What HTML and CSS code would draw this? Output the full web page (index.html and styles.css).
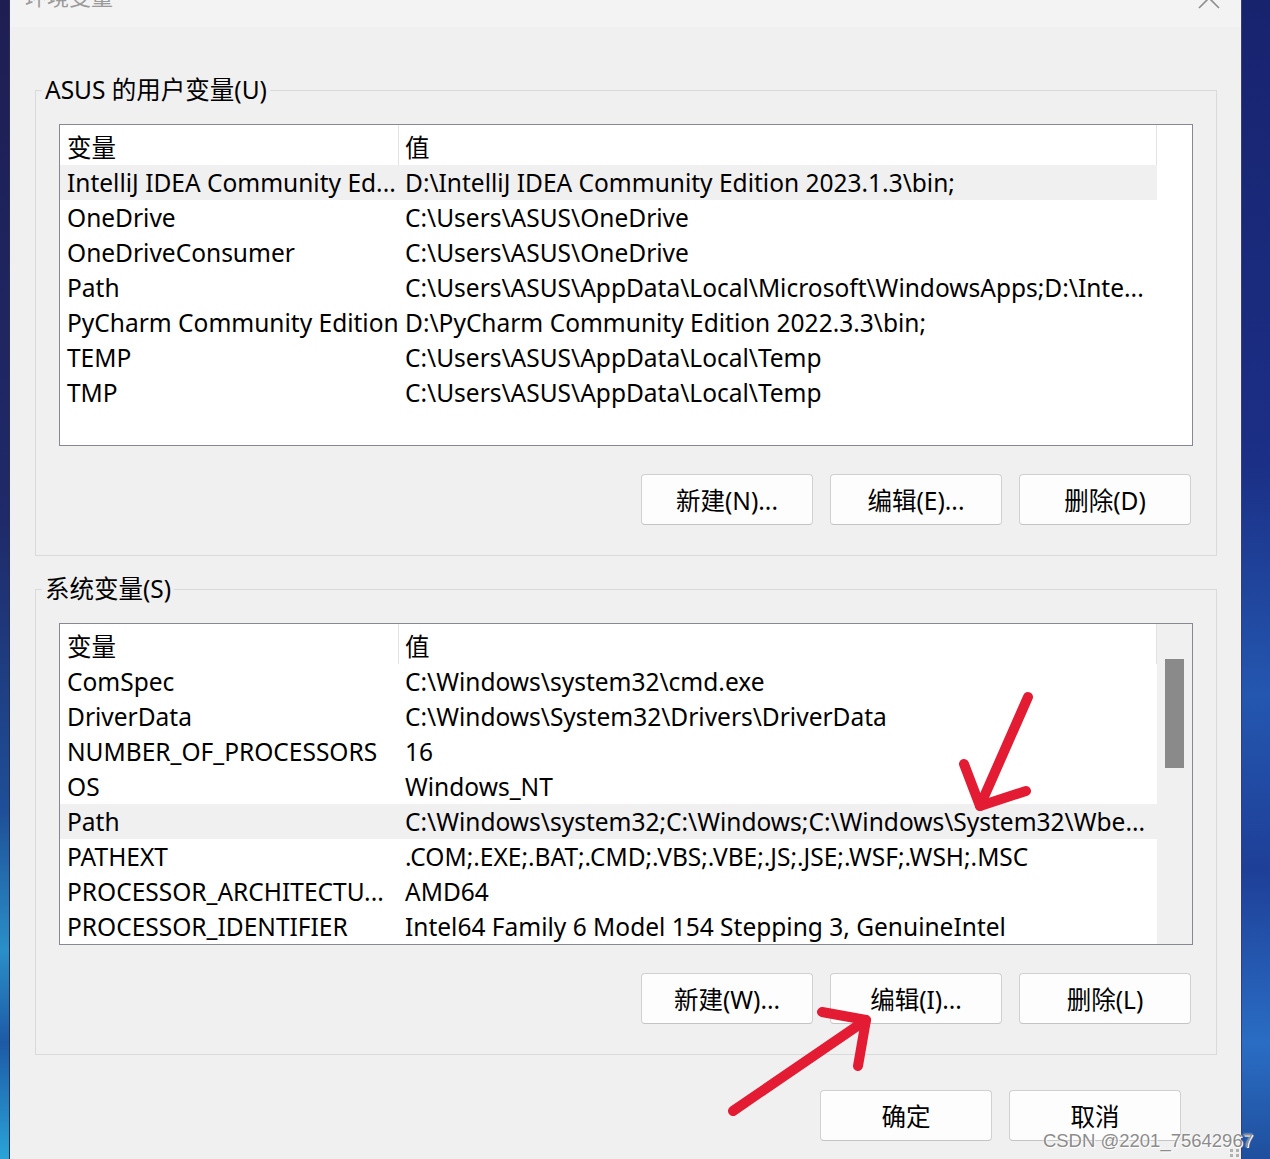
FILE: index.html
```html
<!DOCTYPE html>
<html lang="zh-CN">
<head>
<meta charset="utf-8">
<title>环境变量</title>
<link rel="stylesheet" href="styles.css">
</head>
<body>
<div class="screen">
  <div class="wall wall-left"></div>
  <div class="dialog">
    <div class="titlebar">
      <span class="title">环境变量</span>
      <svg class="close" width="24" height="24" viewBox="0 0 24 24"><path d="M2 2 L22 22 M22 2 L2 22" stroke="#8c8c8c" stroke-width="1.6" fill="none"/></svg>
    </div>
    <div class="content">
      <fieldset class="group">
        <legend>ASUS 的用户变量(U)</legend>
        <div class="group-inner">
          <div class="list">
            <div class="table">
              <div class="row head"><div class="cell name">变量</div><div class="cell value">值</div></div>
              <div class="row selected"><div class="cell name">IntelliJ IDEA Community Ed...</div><div class="cell value">D:\IntelliJ IDEA Community Edition 2023.1.3\bin;</div></div>
              <div class="row"><div class="cell name">OneDrive</div><div class="cell value">C:\Users\ASUS\OneDrive</div></div>
              <div class="row"><div class="cell name">OneDriveConsumer</div><div class="cell value">C:\Users\ASUS\OneDrive</div></div>
              <div class="row"><div class="cell name">Path</div><div class="cell value">C:\Users\ASUS\AppData\Local\Microsoft\WindowsApps;D:\Inte...</div></div>
              <div class="row"><div class="cell name">PyCharm Community Edition</div><div class="cell value">D:\PyCharm Community Edition 2022.3.3\bin;</div></div>
              <div class="row"><div class="cell name">TEMP</div><div class="cell value">C:\Users\ASUS\AppData\Local\Temp</div></div>
              <div class="row"><div class="cell name">TMP</div><div class="cell value">C:\Users\ASUS\AppData\Local\Temp</div></div>
            </div>
            <div class="gutter"></div>
          </div>
          <div class="buttons">
            <button class="btn">新建(N)...</button>
            <button class="btn">编辑(E)...</button>
            <button class="btn">删除(D)</button>
          </div>
        </div>
      </fieldset>

      <fieldset class="group group-sys">
        <legend>系统变量(S)</legend>
        <div class="group-inner">
          <div class="list">
            <div class="table">
              <div class="row head"><div class="cell name">变量</div><div class="cell value">值</div></div>
              <div class="row"><div class="cell name">ComSpec</div><div class="cell value">C:\Windows\system32\cmd.exe</div></div>
              <div class="row"><div class="cell name">DriverData</div><div class="cell value">C:\Windows\System32\Drivers\DriverData</div></div>
              <div class="row"><div class="cell name">NUMBER_OF_PROCESSORS</div><div class="cell value">16</div></div>
              <div class="row"><div class="cell name">OS</div><div class="cell value">Windows_NT</div></div>
              <div class="row selected"><div class="cell name">Path</div><div class="cell value">C:\Windows\system32;C:\Windows;C:\Windows\System32\Wbe...</div></div>
              <div class="row"><div class="cell name">PATHEXT</div><div class="cell value">.COM;.EXE;.BAT;.CMD;.VBS;.VBE;.JS;.JSE;.WSF;.WSH;.MSC</div></div>
              <div class="row"><div class="cell name">PROCESSOR_ARCHITECTU...</div><div class="cell value">AMD64</div></div>
              <div class="row"><div class="cell name">PROCESSOR_IDENTIFIER</div><div class="cell value">Intel64 Family 6 Model 154 Stepping 3, GenuineIntel</div></div>
            </div>
            <div class="gutter scrollbar"><div class="thumb"></div></div>
          </div>
          <div class="buttons">
            <button class="btn">新建(W)...</button>
            <button class="btn">编辑(I)...</button>
            <button class="btn">删除(L)</button>
          </div>
        </div>
      </fieldset>

      <div class="footer">
        <button class="btn">确定</button>
        <button class="btn">取消</button>
      </div>
    </div>
  </div>
  <div class="wall wall-right"></div>

  <svg class="arrows" width="1270" height="1159" viewBox="0 0 1270 1159">
    <g stroke="#e31b33" stroke-width="10" stroke-linecap="round" stroke-linejoin="round" fill="none">
      <path d="M1028 697 L980 806"/>
      <path d="M964 764 L980 806 L1026 791"/>
      <path d="M733 1111 L866 1020"/>
      <path d="M822 1012 L866 1020 L858 1066"/>
    </g>
  </svg>
  <div class="watermark">CSDN @2201_75642967</div>
  <div class="grip"><i></i><i></i><i></i><i></i></div>
</div>
</body>
</html>
```
FILE: styles.css
```css
html, body {
  margin: 0;
  padding: 0;
}
body {
  width: 1270px;
  height: 1159px;
  overflow: hidden;
  font-family: "Noto Sans", "Noto Sans CJK SC", sans-serif;
  color: #000;
}
.screen {
  position: relative;
  display: flex;
  width: 1270px;
  height: 1159px;
  overflow: hidden;
}
.wall-left {
  width: 10px;
  flex: none;
  background: linear-gradient(180deg, #1e1e52 0%, #1f2a6a 45%, #1e4f97 70%, #2a8fc8 82%, #1d5aa6 90%, #2aa4d8 100%);
  border-right: 1px solid #2b2e4a;
  box-sizing: border-box;
}
.wall-right {
  flex: 1;
  background: linear-gradient(180deg, #18236e 0%, #1b2f86 40%, #2457b0 60%, #1e3f98 75%, #2a6dc4 90%, #1f4f9e 100%);
  border-left: 1px solid #3b3f66;
}
.dialog {
  width: 1231px;
  flex: none;
  background: #f0f0f0;
  position: relative;
}
.titlebar {
  height: 27px;
  background: #f3f3f3;
  position: relative;
  overflow: hidden;
}
.title {
  display: block;
  margin: -16px 0 0 15px;
  font-size: 22px;
  line-height: 24px;
  color: #9a9a9a;
}
.close {
  position: absolute;
  left: 1187px;
  top: -14px;
}
.content {
  padding: 48px 24px 0 25px;
}
.group {
  margin: 0;
  padding: 0;
  border: 1px solid #dadada;
  min-width: 0;
}
.group-sys {
  margin-top: 18px;
}
.group legend {
  margin-left: 6px;
  padding: 0 3px;
  font-size: 24.5px;
  line-height: 30px;
}
.group-inner {
  padding: 19px 23px 30px 23px;
}
.list {
  height: 322px;
  box-sizing: border-box;
  border: 1px solid #868993;
  background: #fff;
  display: flex;
  overflow: hidden;
}
.table {
  width: 1097px;
  flex: none;
}
.row {
  display: grid;
  grid-template-columns: 339px 1fr;
  height: 35px;
  line-height: 36px;
  font-size: 24.5px;
}
.row.head {
  height: 40px;
  line-height: 45px;
  border-right: 1px solid #e3e3e3;
}
.row.head .name {
  border-right: 1px solid #e3e3e3;
}
.row.selected {
  background: #f0f0f0;
}
.cell {
  white-space: nowrap;
  overflow: hidden;
}
.cell.name {
  padding-left: 7px;
}
.cell.value {
  padding-left: 6px;
}
.gutter {
  flex: 1;
}
.scrollbar {
  background: #f0f0f0;
}
.thumb {
  margin: 35px 0 0 8px;
  width: 19px;
  height: 109px;
  background: #8a8a8a;
}
.buttons {
  display: flex;
  justify-content: flex-end;
  gap: 17px;
  margin: 28px 2px 0 0;
}
.btn {
  width: 172px;
  height: 51px;
  box-sizing: border-box;
  border: 1px solid #d0d0d0;
  border-bottom-color: #c4c4c4;
  border-radius: 4px;
  background: #fdfdfd;
  font-family: "Noto Sans", "Noto Sans CJK SC", sans-serif;
  font-size: 24.5px;
  color: #000;
  padding: 0;
}
.footer {
  display: flex;
  justify-content: flex-end;
  gap: 17px;
  margin: 35px 36px 0 0;
}
.arrows {
  position: absolute;
  left: 0;
  top: 0;
  pointer-events: none;
}
.watermark {
  position: absolute;
  right: 17px;
  top: 1130px;
  font-family: "Liberation Sans", Arial, sans-serif;
  font-size: 18.5px;
  color: #8c8c8c;
  text-shadow: 0 0 2px #fff, 1px 1px 0 #fff;
}
.grip {
  position: absolute;
  left: 1230px;
  top: 1149px;
  width: 10px;
  display: grid;
  grid-template-columns: 4px 4px;
  gap: 2px;
}
.grip i {
  width: 3px;
  height: 3px;
  background: #b0b0b0;
}
```
